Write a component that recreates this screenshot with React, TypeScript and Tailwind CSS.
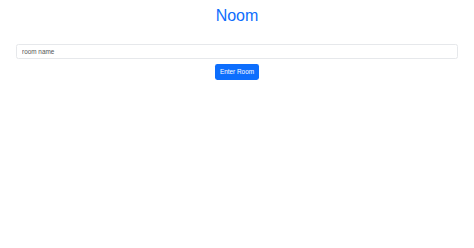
export default function App() {
  return (
    <div className="min-h-screen bg-white px-[16px] pt-[6px] font-['Liberation_Sans',Arial,sans-serif]">
      {/* Header */}
      <h1 className="text-center text-[16px] leading-[1.2] font-normal text-[#0d6efd]">Noom</h1>

      {/* Room form */}
      <form className="mt-[19px] flex flex-col items-center" onSubmit={(e) => e.preventDefault()}>
        <input
          type="text"
          placeholder="room name"
          className="h-[15px] w-full rounded-[2.4px] border border-[#e6e8eb] bg-white px-[5px] text-[6.4px] text-[#212529] placeholder:text-[#555] focus:outline-none"
        />
        <button
          type="submit"
          className="mt-[5px] flex h-[16px] items-center rounded-[2.4px] bg-[#0d6efd] px-[5px] text-[6.4px] text-white"
        >
          Enter Room
        </button>
      </form>
    </div>
  );
}
